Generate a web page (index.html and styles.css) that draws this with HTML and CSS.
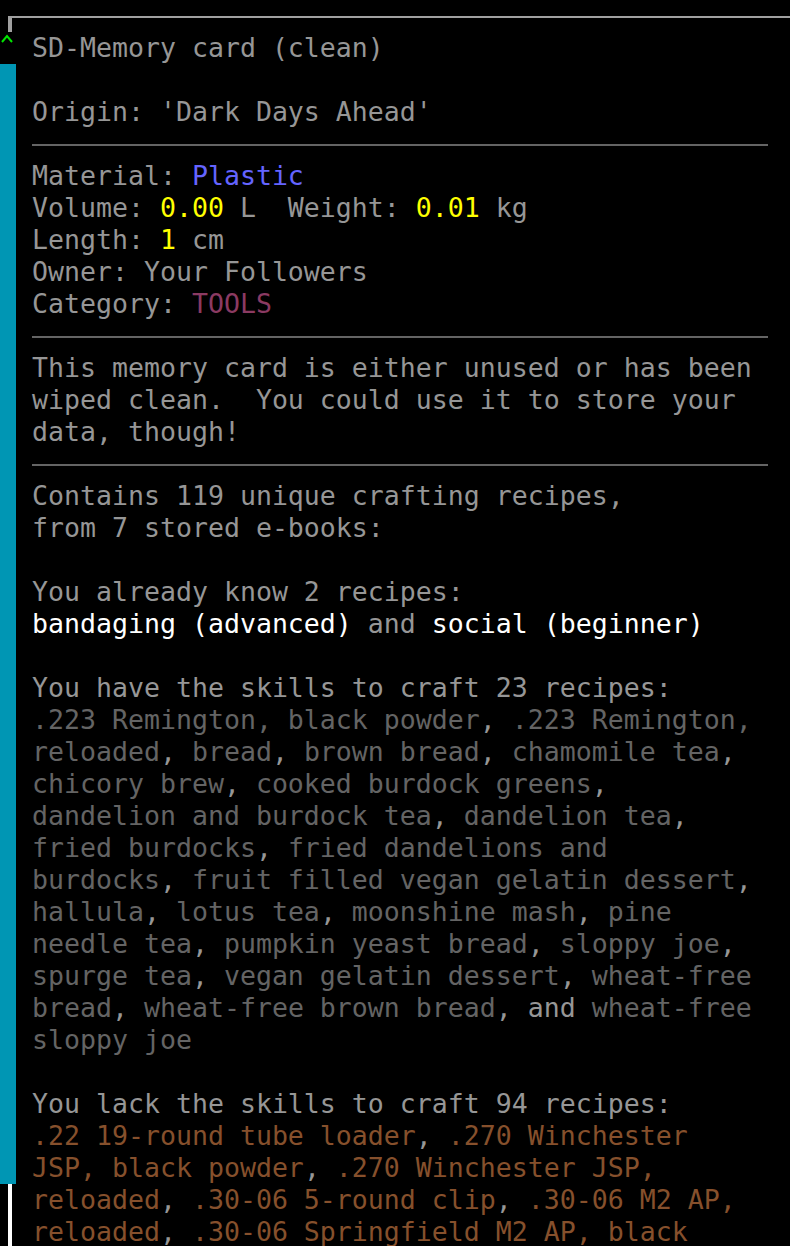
FILE: index.html
```html
<!DOCTYPE html>
<html lang="en">
<head>
    <meta charset="UTF-8">
    <title>SD-Memory card (clean)</title>
    <link rel="stylesheet" href="styles.css">
</head>
<body>
    <div class="frame"><div class="frame-corner"></div></div>
    <div class="panel">
        <div class="scroll">
            <div class="arrow">
                <svg width="16" height="32" viewBox="0 0 16 32"><polyline points="2,10 7,4 12,10" fill="none" stroke="#00e600" stroke-width="2"/></svg>
            </div>
            <div class="thumb"></div>
            <div class="track"></div>
        </div>
        <div class="content">
            <div class="ln">SD-Memory card (clean)</div>
            <div class="ln"></div>
            <div class="ln">Origin: 'Dark Days Ahead'</div>
            <div class="sep"></div>
            <div class="ln">Material: <span class="blue">Plastic</span></div>
            <div class="ln">Volume: <span class="yellow">0.00</span> L  Weight: <span class="yellow">0.01</span> kg</div>
            <div class="ln">Length: <span class="yellow">1</span> cm</div>
            <div class="ln">Owner: Your Followers</div>
            <div class="ln">Category: <span class="magenta">TOOLS</span></div>
            <div class="sep"></div>
            <div class="ln">This memory card is either unused or has been</div>
            <div class="ln">wiped clean.  You could use it to store your</div>
            <div class="ln">data, though!</div>
            <div class="sep"></div>
            <div class="ln">Contains 119 unique crafting recipes,</div>
            <div class="ln">from 7 stored e-books:</div>
            <div class="ln"></div>
            <div class="ln">You already know 2 recipes:</div>
            <div class="ln"><span class="white">bandaging (advanced)</span> and <span class="white">social (beginner)</span></div>
            <div class="ln"></div>
            <div class="ln">You have the skills to craft 23 recipes:</div>
            <div class="ln dark">.223 Remington, black powder<span class="sp">, </span>.223 Remington,</div>
            <div class="ln dark">reloaded<span class="sp">, </span>bread<span class="sp">, </span>brown bread<span class="sp">, </span>chamomile tea<span class="sp">,</span></div>
            <div class="ln dark">chicory brew<span class="sp">, </span>cooked burdock greens<span class="sp">,</span></div>
            <div class="ln dark">dandelion and burdock tea<span class="sp">, </span>dandelion tea<span class="sp">,</span></div>
            <div class="ln dark">fried burdocks<span class="sp">, </span>fried dandelions and</div>
            <div class="ln dark">burdocks<span class="sp">, </span>fruit filled vegan gelatin dessert<span class="sp">,</span></div>
            <div class="ln dark">hallula<span class="sp">, </span>lotus tea<span class="sp">, </span>moonshine mash<span class="sp">, </span>pine</div>
            <div class="ln dark">needle tea<span class="sp">, </span>pumpkin yeast bread<span class="sp">, </span>sloppy joe<span class="sp">,</span></div>
            <div class="ln dark">spurge tea<span class="sp">, </span>vegan gelatin dessert<span class="sp">, </span>wheat-free</div>
            <div class="ln dark">bread<span class="sp">, </span>wheat-free brown bread<span class="sp">, and </span>wheat-free</div>
            <div class="ln dark">sloppy joe</div>
            <div class="ln"></div>
            <div class="ln">You lack the skills to craft 94 recipes:</div>
            <div class="ln brown">.22 19-round tube loader<span class="sp">, </span>.270 Winchester</div>
            <div class="ln brown">JSP, black powder<span class="sp">, </span>.270 Winchester JSP,</div>
            <div class="ln brown">reloaded<span class="sp">, </span>.30-06 5-round clip<span class="sp">, </span>.30-06 M2 AP,</div>
            <div class="ln brown">reloaded<span class="sp">, </span>.30-06 Springfield M2 AP, black</div>
        </div>
    </div>
</body>
</html>
```
FILE: styles.css
```css
html, body {
    margin: 0;
    padding: 0;
    background: #000;
    overflow: hidden;
    height: 100%;
}
body {
    font-family: "DejaVu Sans Mono", "Liberation Mono", monospace;
    font-size: 26.57px;
    line-height: 32px;
    color: #969696;
}
.frame {
    height: 16px;
    padding: 16px 0 0 8px;
}
.frame-corner {
    height: 14px;
    border-top: 2px solid #a0a0a0;
    border-left: 4px solid #a0a0a0;
}
.panel {
    display: flex;
    height: calc(100% - 32px);
}
.scroll {
    width: 16px;
    flex-shrink: 0;
    display: flex;
    flex-direction: column;
}
.arrow {
    height: 32px;
}
.arrow svg {
    display: block;
}
.thumb {
    height: 1120px;
    flex-shrink: 0;
    background: #0096b4;
}
.track {
    flex: 1;
    width: 4px;
    margin-left: 8px;
    background: #fff;
}
.content {
    flex: 1;
    padding-left: 16px;
}
.ln {
    height: 32px;
    white-space: pre;
}
.sep {
    height: 16px;
    padding-top: 16px;
}
.sep::before {
    content: "";
    display: block;
    width: 736px;
    height: 2px;
    background: #646464;
}
.blue { color: #6464ff; }
.yellow { color: #ffff00; }
.magenta { color: #8b3a62; }
.white { color: #ffffff; }
.dark { color: #646464; }
.brown { color: #86502c; }
.sp { color: #969696; }
```
